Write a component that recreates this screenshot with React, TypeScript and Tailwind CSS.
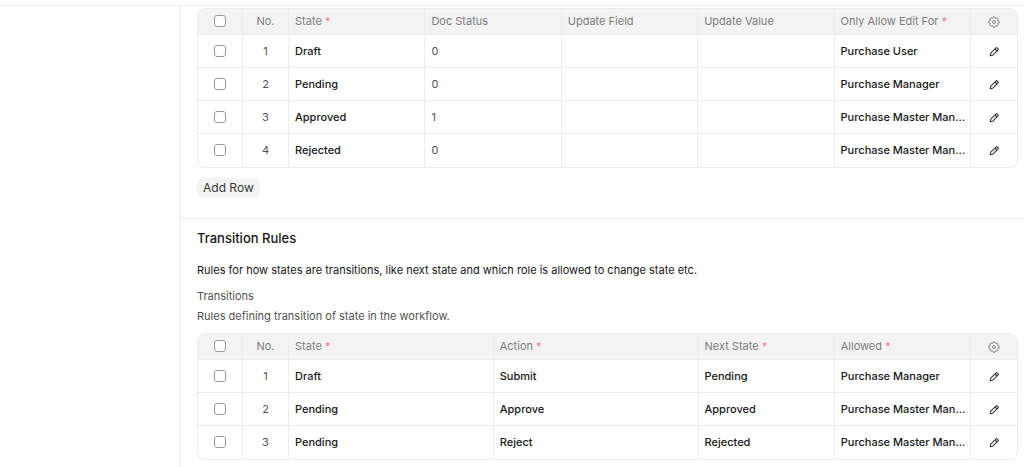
import type { ReactNode } from "react";

type Column = {
  key: string;
  label: string;
  required?: boolean;
  strong?: boolean;
  width?: string;
};

type Row = Record<string, string>;

const STATE_COLUMNS: Column[] = [
  { key: "state", label: "State", required: true, strong: true },
  { key: "docStatus", label: "Doc Status" },
  { key: "updateField", label: "Update Field" },
  { key: "updateValue", label: "Update Value" },
  { key: "role", label: "Only Allow Edit For", required: true, strong: true },
];

const STATES: Row[] = [
  { state: "Draft", docStatus: "0", role: "Purchase User" },
  { state: "Pending", docStatus: "0", role: "Purchase Manager" },
  { state: "Approved", docStatus: "1", role: "Purchase Master Man..." },
  { state: "Rejected", docStatus: "0", role: "Purchase Master Man..." },
];

const TRANSITION_COLUMNS: Column[] = [
  { key: "state", label: "State", required: true, strong: true, width: "w-1/4" },
  { key: "action", label: "Action", required: true, strong: true, width: "w-1/4" },
  { key: "nextState", label: "Next State", required: true, strong: true },
  { key: "allowed", label: "Allowed", required: true, strong: true },
];

const TRANSITIONS: Row[] = [
  { state: "Draft", action: "Submit", nextState: "Pending", allowed: "Purchase Manager" },
  { state: "Pending", action: "Approve", nextState: "Approved", allowed: "Purchase Master Man..." },
  { state: "Pending", action: "Reject", nextState: "Rejected", allowed: "Purchase Master Man..." },
];

function GearIcon() {
  return (
    <svg
      viewBox="0 0 16 16"
      className="h-3 w-3"
      fill="none"
      stroke="currentColor"
      strokeWidth="1.2"
      strokeLinejoin="round"
      aria-hidden="true"
    >
      <path d="M6.9 1.2h2.2l.5 1.7 1 .4 1.6-.8 1.4 1.4-.8 1.6.4 1 1.7.5v2.2l-1.7.5-.4 1 .8 1.6-1.4 1.4-1.6-.8-1 .4-.5 1.7H6.9l-.5-1.7-1-.4-1.6.8-1.4-1.4.8-1.6-.4-1-1.7-.5V7l1.7-.5.4-1-.8-1.6 1.4-1.4 1.6.8 1-.4z" />
      <circle cx="8" cy="8" r="2" />
    </svg>
  );
}

function PencilIcon() {
  return (
    <svg
      viewBox="0 0 12 12"
      className="h-3 w-3"
      fill="none"
      stroke="currentColor"
      strokeWidth="1.1"
      strokeLinejoin="round"
      aria-hidden="true"
    >
      <path d="M2.2 10.8 2.8 8.2 8.1 2.9q.5-.5 1 0l1 1q.5.5 0 1L4.8 10.2z" />
      <path d="m7 4 2 2" />
    </svg>
  );
}

function CheckCell({ label }: { label: string }) {
  return (
    <input
      type="checkbox"
      aria-label={label}
      className="mx-auto block h-3 w-3 appearance-none rounded-[3px] border border-[#999] bg-white checked:bg-[#171717]"
    />
  );
}

/** Editable child table with a row selector, an index and an edit button. */
function Grid({ name, columns, rows }: { name: string; columns: Column[]; rows: Row[] }) {
  return (
    <div className="overflow-hidden rounded-lg border border-[#ededed]">
      <table aria-label={name} className="w-full table-fixed border-separate border-spacing-0 text-[11px] leading-4 text-[#525252]">
        <thead className="bg-[#f3f3f3] text-[#7c7c7c]">
          <tr className="h-[26px] *:border-b *:border-[#ededed] *:p-0 *:pb-px *:font-normal">
            <th className="w-[45px] border-r">
              <CheckCell label={`Select all ${name}`} />
            </th>
            <th className="w-[46px] border-r">No.</th>
            {columns.map((c) => (
              <th key={c.key} className={`border-r text-left ${c.width ?? ""}`}>
                <div className="truncate pl-1.5">
                  {c.label}
                  {c.required && <span className="text-[#eb7b7b]"> *</span>}
                </div>
              </th>
            ))}
            <th className="w-[46px]">
              <button type="button" aria-label="Configure columns" className="mx-auto block pt-0.5">
                <GearIcon />
              </button>
            </th>
          </tr>
        </thead>
        <tbody>
          {rows.map((row, i) => (
            <tr key={i} className="h-[33px] *:border-b *:border-[#ededed] *:p-0 last:*:border-b-white">
              <td className="border-r">
                <CheckCell label={`Select row ${i + 1}`} />
              </td>
              <td className="border-r text-center">{i + 1}</td>
              {columns.map((c) => (
                <td key={c.key} className="border-r">
                  <div className={`truncate pl-1.5 ${c.strong ? "font-medium text-[#171717]" : ""}`}>
                    {row[c.key]}
                  </div>
                </td>
              ))}
              <td>
                <button type="button" aria-label={`Edit row ${i + 1}`} className="mx-auto block text-[#383838]">
                  <PencilIcon />
                </button>
              </td>
            </tr>
          ))}
        </tbody>
      </table>
    </div>
  );
}

function Section({ className, children }: { className: string; children: ReactNode }) {
  return <section className={`pr-1.5 pl-4 ${className}`}>{children}</section>;
}

export default function App() {
  return (
    <div className="flex min-h-screen flex-col bg-white font-['Inter',sans-serif] text-[#171717]">
      <header className="h-1.5 border-b border-[#ededed]" />
      <div className="flex flex-1">
        <aside className="w-[181px] shrink-0 border-r border-[#ededed]" />
        <main className="min-w-0 flex-1">
          <Section className="pt-0.5 pb-5">
            <Grid name="States" columns={STATE_COLUMNS} rows={STATES} />
            <button type="button" className="mt-2.5 block rounded-md bg-[#f3f3f3] px-1.5 text-xs leading-5 text-[#383838]">
              Add Row
            </button>
          </Section>
          <Section className="border-t border-[#ededed] pt-[9px] pb-2">
            <h2 className="text-[13px] leading-5 font-medium">Transition Rules</h2>
            <p className="mt-3 text-[11px] leading-5">
              Rules for how states are transitions, like next state and which role is allowed to change state etc.
            </p>
            <h3 className="mt-2 text-[11px] leading-4 text-[#525252]">Transitions</h3>
            <p className="mt-1 mb-[9px] text-[11px] leading-4 text-[#525252]">
              Rules defining transition of state in the workflow.
            </p>
            <Grid name="Transitions" columns={TRANSITION_COLUMNS} rows={TRANSITIONS} />
          </Section>
        </main>
      </div>
    </div>
  );
}
